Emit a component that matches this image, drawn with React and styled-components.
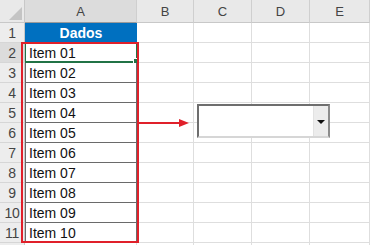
import styled, { createGlobalStyle } from "styled-components";

const GlobalStyle = createGlobalStyle`
  body {
    margin: 0;
    background: #fff;
    font-family: "Liberation Sans", Arial, sans-serif;
  }
`;

const Sheet = styled.div`
  position: relative;
  width: 370px;
  height: 245px;
  overflow: hidden;
  display: grid;
  grid-template-columns: 25px 112px 57px 58px 58px 60px;
  grid-template-rows: 23px repeat(12, 20px);
`;

const Corner = styled.div`
  box-sizing: border-box;
  background: #e9e9e9;
  border-right: 1px solid #c8c8c8;
  border-bottom: 1px solid #c8c8c8;
  position: relative;

  &::after {
    content: "";
    position: absolute;
    right: 2px;
    bottom: 2px;
    width: 0;
    height: 0;
    border-left: 13px solid transparent;
    border-bottom: 13px solid #c4c4c4;
  }
`;

const ColHead = styled.div`
  box-sizing: border-box;
  display: flex;
  align-items: center;
  justify-content: center;
  padding-top: 1px;
  background: ${(p) => (p.$active ? "#dcdcdc" : "#e9e9e9")};
  border-right: 1px solid #cfcfcf;
  border-bottom: 1px solid ${(p) => (p.$active ? "#9a9a9a" : "#c8c8c8")};
  color: #444;
  font-size: 13px;
`;

const RowHead = styled.div`
  box-sizing: border-box;
  display: flex;
  align-items: center;
  justify-content: center;
  background: ${(p) => (p.$active ? "#dcdcdc" : "#ededed")};
  border-right: 1px solid #c8c8c8;
  border-bottom: 1px solid #d6d6d6;
  color: #444;
  font-size: 14px;
  letter-spacing: -0.3px;
  white-space: nowrap;
`;

const Cell = styled.div`
  box-sizing: border-box;
  border-right: 1px solid #dedede;
  border-bottom: 1px solid #dedede;
`;

const TitleCell = styled.div`
  box-sizing: border-box;
  display: flex;
  align-items: center;
  justify-content: center;
  background: #0070c0;
  color: #fff;
  font-weight: bold;
  font-size: 14px;
  border-bottom: 1px solid #fff;
`;

const DataCell = styled.div`
  box-sizing: border-box;
  position: relative;
  display: flex;
  align-items: center;
  padding-left: 3px;
  padding-top: 1px;
  border-left: 1px solid #6a6a6a;
  border-right: 1px solid #6a6a6a;
  border-bottom: 1px solid #6a6a6a;
  color: #111;
  font-size: 14px;
  ${(p) =>
    p.$active &&
    `
    border: 1px solid #217346;
    border-bottom: 2px solid #217346;
    &::after {
      content: "";
      position: absolute;
      right: -3px;
      bottom: -3px;
      width: 4px;
      height: 4px;
      background: #217346;
      border: 1px solid #fff;
    }
  `}
`;

const Highlight = styled.div`
  position: absolute;
  left: 21px;
  top: 42px;
  width: 118px;
  height: 201px;
  box-sizing: border-box;
  border: 2px solid #e0202a;
  pointer-events: none;
`;

const Arrow = styled.svg`
  position: absolute;
  left: 139px;
  top: 118px;
`;

const Combo = styled.div`
  position: absolute;
  left: 197px;
  top: 104px;
  width: 133px;
  height: 34px;
  box-sizing: border-box;
  display: flex;
  justify-content: flex-end;
  background: #fff;
  border-top: 2px solid #6e6e6e;
  border-left: 2px solid #6e6e6e;
  border-right: 2px solid #8c8c8c;
  border-bottom: 2px solid #d6d6d6;
`;

const ComboButton = styled.div`
  width: 14px;
  display: flex;
  align-items: center;
  justify-content: center;
  background: #ececec;
  border-left: 1px solid #e2e2e2;

  &::before {
    content: "";
    width: 0;
    height: 0;
    margin-top: 2px;
    border-left: 4px solid transparent;
    border-right: 4px solid transparent;
    border-top: 4px solid #111;
  }
`;

const columns = ["A", "B", "C", "D", "E"];
const items = Array.from({ length: 10 }, (_, i) => `Item ${String(i + 1).padStart(2, "0")}`);

export default function App() {
  const rows = [];
  for (let r = 1; r <= 12; r++) {
    rows.push(
      <RowHead key={`h${r}`} $active={r === 2}>
        {r <= 11 ? r : ""}
      </RowHead>
    );
    if (r === 1) rows.push(<TitleCell key="a1">Dados</TitleCell>);
    else if (r <= 11)
      rows.push(
        <DataCell key={`a${r}`} $active={r === 2}>
          {items[r - 2]}
        </DataCell>
      );
    else rows.push(<Cell key={`a${r}`} />);
    for (let c = 1; c < columns.length; c++) rows.push(<Cell key={`${c}-${r}`} />);
  }

  return (
    <>
      <GlobalStyle />
      <Sheet>
        <Corner />
        {columns.map((c) => (
          <ColHead key={c} $active={c === "A"}>
            {c}
          </ColHead>
        ))}
        {rows}
        <Highlight />
        <Arrow width="52" height="10" viewBox="0 0 52 10">
          <line x1="0" y1="5" x2="42" y2="5" stroke="#e0202a" strokeWidth="2" />
          <polygon points="40,1 50,5 40,9" fill="#e0202a" />
        </Arrow>
        <Combo>
          <ComboButton />
        </Combo>
      </Sheet>
    </>
  );
}
